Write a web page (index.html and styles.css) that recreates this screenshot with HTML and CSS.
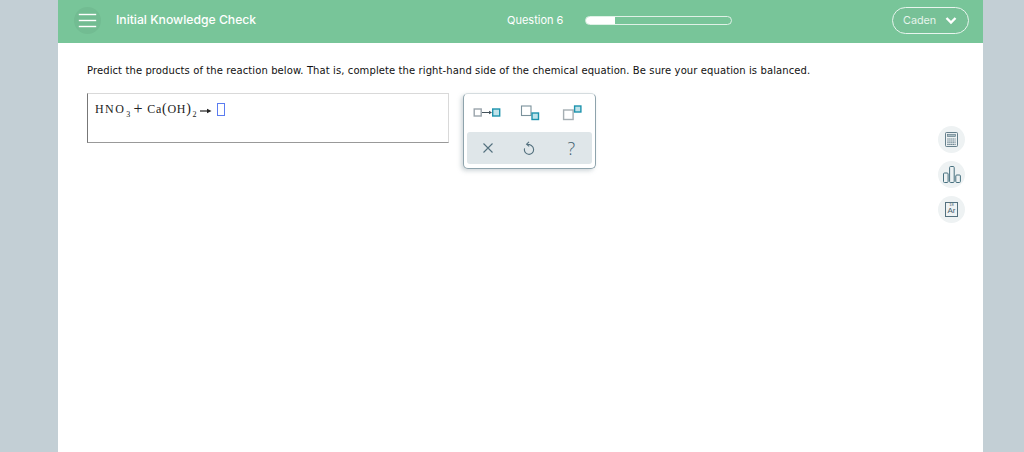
FILE: index.html
```html
<!DOCTYPE html>
<html lang="en">
<head>
<meta charset="utf-8">
<title>Initial Knowledge Check</title>
<link rel="stylesheet" href="styles.css">
</head>
<body>
<div class="page">
  <header class="topbar">
    <div class="menu-btn"><span></span><span></span><span></span></div>
    <div class="title">Initial Knowledge Check</div>
    <div class="question">Question 6</div>
    <div class="progress"><div class="progress-fill"></div></div>
    <div class="user">
      <span>Caden</span>
      <svg class="chev" width="12" height="9" viewBox="0 0 12 9"><path d="M1.5 2 L6 6.5 L10.5 2" fill="none" stroke="#fff" stroke-width="2.4"/></svg>
    </div>
  </header>
  <main class="content">
    <div class="work">
      <p class="prompt">Predict the products of the reaction below. That is, complete the right-hand side of the chemical equation. Be sure your equation is balanced.</p>
      <div class="row">
        <div class="answer">
          <span class="eq wide">HNO<sub>3</sub></span>
          <span class="eq plus">+</span>
          <span class="eq">Ca<span class="paren">(</span>OH<span class="paren">)</span><sub>2</sub></span>
          <svg class="arrow" width="12" height="6" viewBox="0 0 12 6"><path d="M0 3H8" stroke="#222" stroke-width="1.2"/><path d="M7 0.8L11.5 3L7 5.2Z" fill="#222"/></svg>
          <span class="slot"></span>
        </div>
        <div class="palette">
          <div class="tools">
            <svg width="28" height="12" viewBox="0 0 28 12"><rect x="1.2" y="2" width="7" height="7" fill="#fff" stroke="#9aa4ab" stroke-width="1.4"/><path d="M9 5.5H17" stroke="#44525a"/><path d="M16 3.7L19 5.5L16 7.3Z" fill="#44525a"/><rect x="19.7" y="2" width="7" height="7" fill="#bfe3ea" stroke="#1d93ad" stroke-width="1.4"/></svg>
            <svg class="mid" width="20" height="16" viewBox="0 0 20 16"><rect x="1.5" y="1" width="9.5" height="9.5" fill="#fff" stroke="#7b929c" stroke-width="1.1"/><rect x="12" y="8" width="6.5" height="6.5" fill="#bfe3ea" stroke="#1d93ad" stroke-width="1.4"/></svg>
            <svg width="20" height="16" viewBox="0 0 20 16"><rect x="1.6" y="5" width="9.5" height="9.5" fill="#fff" stroke="#a5aeb3" stroke-width="1.4"/><rect x="12.6" y="1" width="6.3" height="6" fill="#bfe3ea" stroke="#1d93ad" stroke-width="1.4"/></svg>
          </div>
          <div class="actions">
            <svg width="12" height="12" viewBox="0 0 12 12"><path d="M1.5 1.5L10.5 10.5M10.5 1.5L1.5 10.5" stroke="#53707e" stroke-width="1.1" fill="none"/></svg>
            <svg class="undo" width="12" height="14" viewBox="0 0 12 14"><path d="M6 0.8L3.6 3.2L6.2 5.4M3.6 3.2C7 3 10.6 5 10.6 8.6A4.6 4.6 0 1 1 1.6 7.4" stroke="#53707e" stroke-width="1.1" fill="none"/></svg>
            <span class="help">?</span>
          </div>
        </div>
      </div>
    </div>
    <aside class="side">
      <div class="side-btn"><svg width="13" height="15" viewBox="0 0 14 16"><rect x="0.5" y="0.5" width="13" height="15" rx="1" fill="none" stroke="#53707e"/><rect x="2.5" y="2.5" width="9" height="2.5" fill="#a9bac2" stroke="#53707e" stroke-width="0.6"/><path d="M2.5 7.5H11.5M2.5 9.5H11.5M2.5 11.5H11.5M2.5 13.5H11.5" stroke="#53707e" stroke-width="1.1" stroke-dasharray="1.4 .7"/></svg></div>
      <div class="side-btn"><svg width="18" height="17" viewBox="0 0 18 17"><rect x="0.5" y="7" width="4.6" height="9.5" rx="1" fill="none" stroke="#47707f"/><rect x="6.6" y="0.5" width="4.6" height="16" rx="1" fill="none" stroke="#47707f"/><rect x="12.8" y="9" width="4.6" height="7.5" rx="1" fill="none" stroke="#47707f"/></svg></div>
      <div class="side-btn"><div class="element"><span class="num">18</span><span class="sym">Ar</span></div></div>
    </aside>
  </main>
</div>
</body>
</html>
```
FILE: styles.css
```css
* { box-sizing: border-box; }
html, body { margin: 0; height: 100%; overflow: hidden; }
body { background: #c3cfd5; padding: 0 41px 0 58px; }
.page { background: #fff; height: 452px; display: flex; flex-direction: column; }

.topbar {
  height: 43px; background: #78c599; color: #fff; padding-bottom: 3px;
  display: flex; align-items: center;
  font-family: "Inter", "Liberation Sans", sans-serif;
}
.menu-btn {
  width: 27px; height: 27px; margin-left: 16px; border-radius: 50%;
  background: #72bc92; display: flex; flex-direction: column;
  justify-content: center; align-items: center; gap: 5px;
}
.menu-btn span { display: block; width: 17px; height: 1px; background: #fff; box-shadow: 0 0 0 .2px #fff; }
.title { margin: 0 0 1px 15px; width: 391px; font-size: 12.2px; font-weight: 500; }
.question { width: 78px; margin-bottom: 1px; font-size: 11px; font-weight: 400; }
.progress {
  width: 147px; height: 9px; border: 1px solid #dff1e6; border-radius: 5px; overflow: hidden;
}
.progress-fill { width: 29px; height: 100%; background: #fff; }
.user {
  margin-left: auto; margin-right: 14px; width: 77px; height: 27px;
  border: 1px solid #e8f5ee; border-radius: 14px; background: #77c197;
  display: flex; align-items: center; padding-left: 10px; gap: 9px;
  font-size: 10.8px; color: #e6f4ec;
}
.chev { flex: none; }

.content { flex: 1; display: flex; padding-left: 29px; }
.work { width: 790px; }
.prompt {
  margin: 21px 0 0; font-family: "DejaVu Sans", sans-serif; font-size: 10px; line-height: 13px;
  letter-spacing: .1px; color: #111; white-space: nowrap;
}
.row { display: flex; margin-top: 16px; align-items: flex-start; }
.answer {
  width: 362px; height: 50px; border: 1px solid #d9d9d9; border-left-color: #777; border-bottom-color: #999;
  padding: 8px 0 0 7px; display: flex; align-items: flex-start;
  font-family: "Liberation Serif", serif; color: #222; font-size: 12px; line-height: 14px;
}
.eq { letter-spacing: .7px; }
.wide { letter-spacing: 1.4px; }
.eq sub { font-size: 8px; line-height: 0; vertical-align: -4px; margin-left: 1px; }
.paren { font-size: 14px; line-height: 0; }
.plus { margin: 0 4px 0 2px; font-size: 16px; }
.arrow { margin: 6px 5px 0 3px; flex: none; }
.slot { width: 8px; height: 13px; border: 1px solid #5b7cf0; margin-top: 1px; }

.palette {
  width: 133px; height: 76px; margin-left: 14px; background: #fff;
  border: 1px solid #8ea3ac; border-top-color: #d5dcdf; border-radius: 5px;
  box-shadow: -2px 2px 4px rgba(120,140,150,.35);
  padding: 0 3px; display: flex; flex-direction: column;
}
.tools { height: 38px; display: flex; align-items: center; justify-content: space-between; padding: 0 10px 0 6px; }
.mid { margin-right: 3px; }
.actions {
  height: 32px; background: #dfe6e9; border-radius: 3px;
  display: flex; align-items: center; justify-content: space-between; padding: 0 17px 0 15px;
}
.undo { margin-right: 3px; }
.help { font-family: "Open Sans", sans-serif; font-size: 18px; font-weight: 300; color: #3f5f6e; }

.side { flex: 1; display: flex; flex-direction: column; align-items: flex-end; padding: 83px 18px 0 0; gap: 8px; }
.side-btn {
  width: 27px; height: 27px; border-radius: 50%; background: #eef2f3;
  display: flex; align-items: center; justify-content: center;
}
.element {
  width: 13px; height: 15px; border: 1px solid #53707e; display: flex; flex-direction: column; align-items: center;
  font-family: "Liberation Sans", sans-serif; color: #47606c; line-height: 1;
}
.num { font-size: 4px; }
.sym { font-size: 8px; }
```
